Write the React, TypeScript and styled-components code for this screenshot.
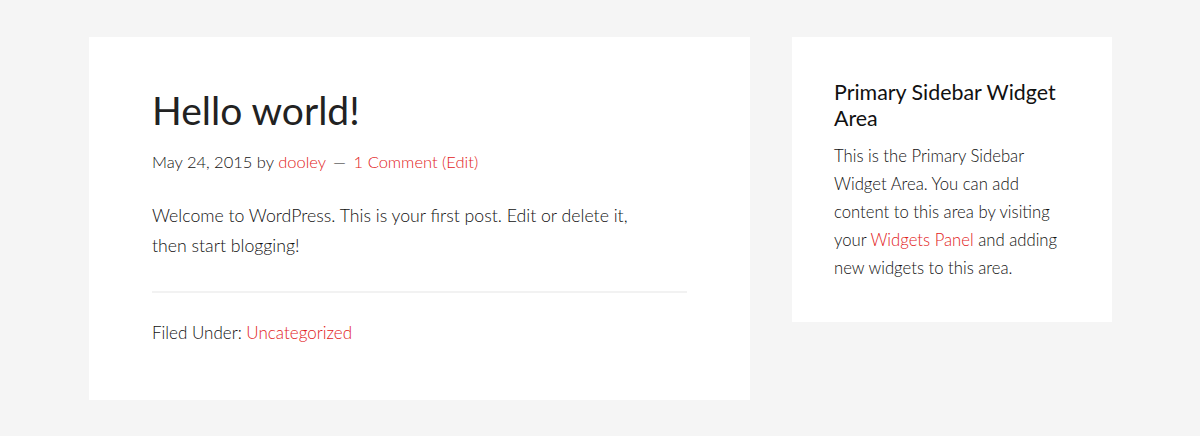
import * as React from "react";
import styled, { createGlobalStyle } from "styled-components";

let GlobalStyle = createGlobalStyle`
  html, body {
    margin: 0;
    padding: 0;
    background-color: #f5f5f5;
  }
  body {
    color: #111;
    font-family: Lato, "Open Sans", "Liberation Sans", sans-serif;
    font-weight: 300;
  }
  a {
    color: #e2221b;
    text-decoration: none;
  }
`;

let App = () => {
  return (
    <React.Fragment>
      <GlobalStyle />
      <SiteInner>
        <Content>
          <Entry>
            <EntryTitle>Hello world!</EntryTitle>
            <EntryMeta>
              May 24, 2015 by <a href="#">dooley</a> <Dash>—</Dash>{" "}
              <a href="#">1 Comment</a> <a href="#">(Edit)</a>
            </EntryMeta>
            <EntryContent>
              Welcome to WordPress. This is your first post. Edit or delete it,
              <br />
              then start blogging!
            </EntryContent>
            <EntryFooter>
              Filed Under: <a href="#">Uncategorized</a>
            </EntryFooter>
          </Entry>
        </Content>
        <Sidebar>
          <Widget>
            <WidgetTitle>Primary Sidebar Widget Area</WidgetTitle>
            <WidgetText>
              This is the Primary Sidebar Widget Area. You can add content to
              this area by visiting your <a href="#">Widgets Panel</a> and
              adding new widgets to this area.
            </WidgetText>
          </Widget>
        </Sidebar>
      </SiteInner>
    </React.Fragment>
  );
};

let SiteInner = styled.div`
  display: flex;
  align-items: flex-start;
  gap: 42px;
  padding: 37px 0 0 89px;
`;

let Content = styled.main`
  width: 661px;
`;

let Entry = styled.article`
  background-color: #fff;
  height: 363px;
  box-sizing: border-box;
  padding: 50px 63px 0;
`;

let EntryTitle = styled.h1`
  margin: 0 0 15px;
  font-size: 39px;
  font-weight: 400;
  line-height: 1.2;
  color: #222;
`;

let EntryMeta = styled.p`
  margin: 0 0 26px;
  font-size: 16.5px;
  line-height: 1.6;
`;

let Dash = styled.span`
  margin: 0 3px;
`;

let EntryContent = styled.p`
  margin: 0 0 30px;
  font-size: 17.7px;
  line-height: 30px;
`;

let EntryFooter = styled.footer`
  border-top: 2px solid #f2f2f2;
  padding-top: 26px;
  font-size: 17px;
  line-height: 1.6;
`;

let Sidebar = styled.aside`
  width: 320px;
`;

let Widget = styled.section`
  background-color: #fff;
  box-sizing: border-box;
  height: 285px;
  padding: 43px 42px 0;
`;

let WidgetTitle = styled.h4`
  margin: 0 0 11px;
  font-size: 21.4px;
  font-weight: 400;
  line-height: 25.5px;
  color: #111;
`;

let WidgetText = styled.p`
  margin: 0;
  font-size: 16.7px;
  line-height: 28px;
`;

export default App;
